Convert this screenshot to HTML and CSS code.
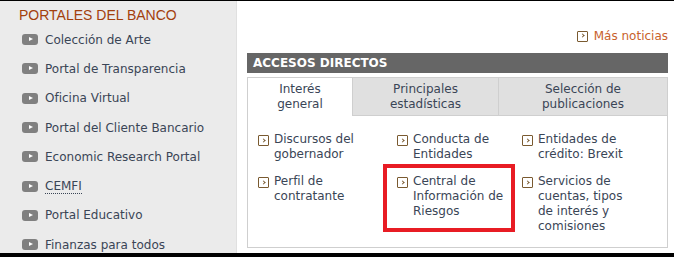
FILE: index.html
```html
<!DOCTYPE html>
<html lang="es">
<head>
<meta charset="utf-8">
<link rel="stylesheet" href="styles.css">
</head>
<body>
<div class="frame">
  <aside class="side">
    <h2 class="side-title">PORTALES DEL BANCO</h2>
    <ul class="portal-list">
      <li><span class="play"></span><a href="#">Colección de Arte</a></li>
      <li><span class="play"></span><a href="#">Portal de Transparencia</a></li>
      <li><span class="play"></span><a href="#">Oficina Virtual</a></li>
      <li><span class="play"></span><a href="#">Portal del Cliente Bancario</a></li>
      <li><span class="play"></span><a href="#">Economic Research Portal</a></li>
      <li><span class="play"></span><a href="#"><abbr>CEMFI</abbr></a></li>
      <li><span class="play"></span><a href="#">Portal Educativo</a></li>
      <li><span class="play"></span><a href="#">Finanzas para todos</a></li>
    </ul>
  </aside>
  <main class="main">
    <div class="more"><span class="arrow-box"></span><a href="#">Más noticias</a></div>
    <h3 class="bar">ACCESOS DIRECTOS</h3>
    <div class="tabs-box">
      <div class="tabs">
        <div class="tab active">Interés<br>general</div>
        <div class="tab">Principales<br>estadísticas</div>
        <div class="tab">Selección de<br>publicaciones</div>
      </div>
      <div class="links">
        <a class="link" href="#"><span class="arrow-box"></span><span>Discursos del gobernador</span></a>
        <a class="link" href="#"><span class="arrow-box"></span><span>Conducta de Entidades</span></a>
        <a class="link" href="#"><span class="arrow-box"></span><span>Entidades de crédito: Brexit</span></a>
        <a class="link" href="#"><span class="arrow-box"></span><span>Perfil de contratante</span></a>
        <a class="link highlight" href="#"><span class="arrow-box"></span><span>Central de Información de Riesgos</span></a>
        <a class="link" href="#"><span class="arrow-box"></span><span>Servicios de cuentas, tipos de interés y comisiones</span></a>
      </div>
    </div>
  </main>
</div>
</body>
</html>
```
FILE: styles.css
```css
html, body { margin: 0; padding: 0; }
body { width: 674px; height: 257px; overflow: hidden; background: #000; }
.frame {
  display: flex;
  height: 252px;
  margin-top: 1px;
  font-family: "DejaVu Sans", Verdana, sans-serif;
  font-size: 12px;
  color: #3a4556;
}
.side {
  width: 236px;
  flex: none;
  background: #ebebeb;
  padding: 6px 0 0 19px;
  box-sizing: border-box;
}
.side-title {
  margin: 0 0 1px;
  font-family: "Liberation Sans", Arial, sans-serif;
  font-weight: normal;
  font-size: 14px;
  color: #a3400c;
  line-height: 17px;
}
.portal-list { list-style: none; margin: 0; padding: 0 0 0 3px; }
.portal-list li {
  display: flex;
  align-items: center;
  height: 29.3px;
}
.portal-list a { color: #3a4556; text-decoration: none; }
.portal-list abbr { text-decoration: none; border-bottom: 1px dotted #3a4556; }
.play {
  width: 16px;
  height: 11px;
  border-radius: 3px;
  background: #808080;
  margin-right: 7px;
  position: relative;
  flex: none;
}
.play::after {
  content: "";
  position: absolute;
  left: 7px;
  top: 3px;
  border-left: 4px solid #fff;
  border-top: 2.5px solid transparent;
  border-bottom: 2.5px solid transparent;
}
.main {
  flex: 1;
  background: #fff;
  border-left: 1px solid #e0e0e0;
  padding: 0 6px 0 10px;
}
.more {
  display: flex;
  justify-content: flex-end;
  align-items: center;
  margin-top: 27px;
  height: 16px;
}
.more a { color: #c8612c; text-decoration: none; }
.more .arrow-box { margin-right: 6px; }
.arrow-box {
  display: inline-block;
  width: 9px;
  height: 9px;
  border: 1px solid #7a5a30;
  border-radius: 1px;
  position: relative;
  flex: none;
}
.arrow-box::after {
  content: "";
  position: absolute;
  left: 3px;
  top: 2.5px;
  width: 2px;
  height: 2px;
  border-right: 1px solid #7a5a30;
  border-bottom: 1px solid #7a5a30;
  transform: rotate(-45deg);
}
.bar {
  margin: 9px 0 4px;
  height: 20px;
  line-height: 20px;
  background: #666;
  color: #fff;
  font-size: 12px;
  font-weight: bold;
  padding-left: 6px;
}
.tabs-box {
  border: 1px solid #cfcfcf;
  border-top: none;
  height: 170px;
}
.tabs { display: flex; height: 39px; }
.tab {
  background: #e0e0e0;
  border: 1px solid #cfcfcf;
  border-left: none;
  text-align: center;
  line-height: 15px;
  padding-top: 4px;
  box-sizing: border-box;
  color: #3a4556;
}
.tab:nth-child(1) { width: 105px; }
.tab:nth-child(2) { width: 146px; }
.tab:nth-child(3) { flex: 1; border-right: none; }
.tab.active { background: #fff; border-bottom: none; border-left: none; }
.links {
  display: grid;
  grid-template-columns: 139px 125px 1fr;
  row-gap: 12px;
  padding: 16px 0 0 10px;
}
.link {
  display: flex;
  align-items: flex-start;
  gap: 5px;
  color: #3a4556;
  text-decoration: none;
  line-height: 15px;
  position: relative;
}
.link .arrow-box { margin-top: 3px; }
.link > span:last-child { max-width: 100px; }
.highlight::before {
  content: "";
  position: absolute;
  left: -14px;
  top: -10px;
  width: 124px;
  height: 60px;
  border: 4px solid #e81c24;
}
```
